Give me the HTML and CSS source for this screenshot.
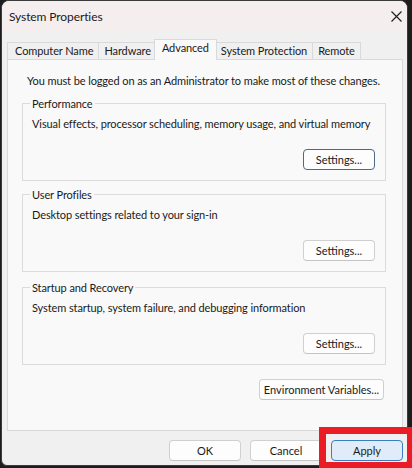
FILE: index.html
```html
<!DOCTYPE html>
<html lang="en">
<head>
  <meta charset="UTF-8" />
  <title>System Properties</title>
  <meta name="viewport" content="width=device-width, initial-scale=1.0" />
  <link rel="stylesheet" href="styles.css">
</head>
<body>

  <div class="window">
    <div class="titlebar">
      <span class="title">System Properties</span>
      <span class="close">
        <svg width="11" height="11" viewBox="0 0 11 11"><path d="M0.5 0.5 L10.5 10.5 M10.5 0.5 L0.5 10.5" stroke="#1b1b1b" stroke-width="1.1" fill="none"/></svg>
      </span>
    </div>

    <div class="dialog">
      <div class="tabs">
        <div class="tab">Computer Name</div>
        <div class="tab">Hardware</div>
        <div class="tab active">Advanced</div>
        <div class="tab">System Protection</div>
        <div class="tab">Remote</div>
      </div>

      <div class="page">
        <p class="note">You must be logged on as an Administrator to make most of these changes.</p>

        <fieldset class="group">
          <legend>Performance</legend>
          <p class="desc">Visual effects, processor scheduling, memory usage, and virtual memory</p>
          <div class="row"><button class="btn default">Settings...</button></div>
        </fieldset>

        <fieldset class="group">
          <legend>User Profiles</legend>
          <p class="desc">Desktop settings related to your sign-in</p>
          <div class="row"><button class="btn">Settings...</button></div>
        </fieldset>

        <fieldset class="group">
          <legend>Startup and Recovery</legend>
          <p class="desc">System startup, system failure, and debugging information</p>
          <div class="row"><button class="btn">Settings...</button></div>
        </fieldset>

        <div class="row env"><button class="btn wide">Environment Variables...</button></div>
      </div>

      <div class="actions">
        <button class="btn">OK</button>
        <button class="btn">Cancel</button>
        <button class="btn apply">Apply</button>
      </div>
    </div>
  </div>

  <div class="mark"></div>

</body>
</html>
```

FILE: styles.css
```css
* { margin: 0; padding: 0; box-sizing: border-box; }
html, body { width: 412px; height: 468px; overflow: hidden; }
body {
  background: #1d1d1d; padding: 0 0 0 1px; position: relative;
  font-family: Lato, "Liberation Sans", sans-serif; font-size: 11px; color: #1a1a1a;
  letter-spacing: -0.1px;
}

.window {
  width: 407px; height: 466px; border: 1px solid #3a3a3a; border-radius: 8px 8px 6px 6px;
  background: #f0f0f0; overflow: hidden; display: flex; flex-direction: column;
}

.titlebar {
  height: 30px; flex: none; display: flex; align-items: center; justify-content: space-between;
  background: #f4eeef; padding: 0 5px 0 7px;
}
.title { font-size: 12px; line-height: 15px; }
.close { width: 11px; height: 11px; display: flex; }
.close svg { display: block; }

.dialog { flex: 1; display: flex; flex-direction: column; padding: 8px 4px 0 5px; }

/* tab strip, the active tab sits 2px higher and wider */
.tabs { display: flex; height: 20px; align-items: flex-end; position: relative; z-index: 1; }
.tab {
  height: 17px; line-height: 16px; padding: 0 5px; background: #f0f0f0;
  border: 1px solid #d9d9d9; border-bottom: none; margin-right: -1px; white-space: nowrap;
}
.tab:first-child { padding-left: 7px; }
.tab.active {
  height: 21px; line-height: 15px; padding: 0 7px; margin: 0 -2px -1px -2px;
  background: #f9f9f9; position: relative; z-index: 2;
}

.page {
  background: #f9f9f9; border: 1px solid #d9d9d9; height: 372px;
  padding: 13px 16px 0 14px; display: flex; flex-direction: column;
}

.note { line-height: 15px; padding-left: 5px; margin-bottom: 8px; white-space: nowrap; }

.group {
  border: 1px solid #dcdcdc; padding: 0 10px 10px 6px; margin-bottom: 7px; min-width: 0;
}
.group legend { line-height: 15px; padding: 0 2px; margin-left: 1px; }
.group:nth-of-type(2) { margin-top: -1px; }
.group:nth-of-type(3) { margin-top: 1px; }
.desc { line-height: 15px; margin-top: 5px; padding-left: 3px; white-space: nowrap; }

.row { display: flex; justify-content: flex-end; }
.group .row { margin-top: 18px; }

.btn {
  font: inherit; color: #1a1a1a; width: 72px; height: 21px; line-height: 17px;
  background: #fdfdfd; border: 1px solid #d0d0d0; border-bottom-color: #c4c4c4;
  border-radius: 4px; white-space: nowrap;
}
.btn.default { border-color: #4d6986; }
.btn.wide { width: 125px; }

.env { margin-top: 7px; padding-right: 2px; }

.actions { display: flex; justify-content: flex-end; gap: 9px; margin-top: 9px; }
.btn.apply { background: #e0ecf8; border-color: #3c7dc2; }

/* red highlight frame drawn over the Apply button */
.mark {
  position: absolute; left: 319px; top: 427px; width: 95px; height: 42px;
  border: 7px solid #ea1c25;
}
```
